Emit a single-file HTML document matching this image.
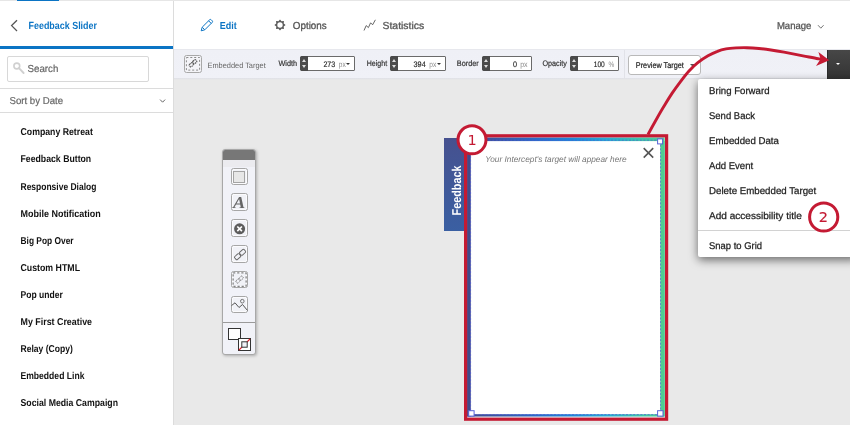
<!DOCTYPE html>
<html lang="en">
<head>
<meta charset="utf-8">
<title>Feedback Slider</title>
<style>
html,body{margin:0;padding:0;}
body{width:850px;height:425px;overflow:hidden;position:relative;background:#fff;font-family:"Liberation Sans",sans-serif;color:#555;}
.abs{position:absolute;}
/* sidebar */
#side{left:0;top:0;width:173px;height:425px;background:#fff;border-right:1px solid #dcdcdc;}
#topline{left:0;top:0;width:850px;height:1px;background:#e6e6e6;}
#topblue{left:17px;top:0;width:41.8px;height:1px;background:#0b74c4;}
#blueline{left:0;top:45.9px;width:173.3px;height:3.6px;background:#0b74c4;}
#search{left:7px;top:56px;width:140px;height:23.5px;border:1px solid #d8d8d8;border-radius:2px;background:#fff;}
.hl{position:absolute;left:0;width:173px;height:1px;background:#dcdcdc;}
/* main */
#canvas{left:174px;top:79px;width:676px;height:346px;background:#e9e9e9;}
#toolbar{left:174px;top:49px;width:676px;height:31px;background:linear-gradient(#e3e4e9 0,#eff0f6 1.5px,#f0f1f7 29px,#dfe0e4 29.6px,#dfe0e4 30.2px,#e9e9e9 30.6px);}
.inp{position:absolute;top:55.5px;height:13.5px;border:1px solid #6a6a6a;background:#fff;border-radius:2px 1px 1px 2px;}
.spin{position:absolute;left:-1px;top:-1px;width:8px;height:15.5px;background:#4a4a4a;border-radius:2px 0 0 2px;}
.spin:before,.spin:after{content:"";position:absolute;left:2px;border-left:2px solid transparent;border-right:2px solid transparent;}
.spin:before{top:3px;border-bottom:3px solid #ddd;}
.spin:after{bottom:3px;border-top:3px solid #ddd;}
/* menu */
#menu{left:698px;top:79px;width:160px;height:178px;background:#fff;border-radius:2px;box-shadow:0 3px 10px rgba(0,0,0,.55);}
/* palette */
#pal{left:222px;top:148.5px;width:33.5px;height:206.5px;box-sizing:border-box;background:#f1f2f8;border:1px solid #a8a8a8;border-radius:3px;box-shadow:1px 1px 3px rgba(0,0,0,.25);overflow:hidden;}
.pb{position:absolute;left:230.7px;width:17.2px;height:17.6px;box-sizing:border-box;border:1px solid #a6a6a6;border-radius:2.5px;background:#f1f2f7;box-shadow:inset 0 0 0 1px #fbfbfd;}
</style>
</head>
<body>
<!-- canvas + toolbar -->
<div id="canvas" class="abs"></div>
<div id="toolbar" class="abs"></div>

<!-- sidebar -->
<div id="side" class="abs"></div>
<div id="topline" class="abs"></div>
<div id="topblue" class="abs"></div>
<div id="blueline" class="abs"></div>
<svg class="abs" style="left:9px;top:18px" width="12" height="16" viewBox="0 0 12 16"><path d="M8 2.2 L2.6 7.6 L8 13" fill="none" stroke="#555" stroke-width="1.3"/></svg>
<div id="search" class="abs"></div>
<svg class="abs" style="left:12px;top:62px" width="14" height="14" viewBox="0 0 14 14"><circle cx="4.8" cy="4" r="2.9" fill="none" stroke="#d0d0d0" stroke-width="1.6"/><path d="M7 6.2 L11.6 11" stroke="#d0d0d0" stroke-width="1.9" stroke-linecap="round"/></svg>
<div class="hl" style="top:88px"></div>
<svg class="abs" style="left:159px;top:98px" width="8" height="6" viewBox="0 0 8 6"><path d="M1.1 1.6 L3.6 4.2 L6.1 1.6" fill="none" stroke="#666" stroke-width="1"/></svg>
<div class="hl" style="top:112px"></div>


<!-- top nav -->
<svg class="abs" style="left:200px;top:18px" width="14" height="14" viewBox="0 0 14 14"><path d="M1.2 12.8 L2.2 9.2 L9.6 1.8 Q10.4 1 11.2 1.8 L12.2 2.8 Q13 3.6 12.2 4.4 L4.8 11.8 Z M2.4 9.4 L4.6 11.6 M8.6 2.8 L11.2 5.4" fill="none" stroke="#0b74c4" stroke-width="1"/></svg>
<svg class="abs" style="left:272.7px;top:18.2px" width="14" height="14" viewBox="-7 -7 14 14"><polygon points="0.00,-5.60 1.53,-3.70 3.96,-3.96 3.70,-1.53 5.60,-0.00 3.70,1.53 3.96,3.96 1.53,3.70 0.00,5.60 -1.53,3.70 -3.96,3.96 -3.70,1.53 -5.60,0.00 -3.70,-1.53 -3.96,-3.96 -1.53,-3.70" fill="#5a5a5a"/><circle r="2.7" fill="#fff"/></svg>
<svg class="abs" style="left:363px;top:19px" width="14" height="13" viewBox="0 0 14 13"><path d="M1 11.5 L3.2 6.6 L5.4 8.6 L7.6 3.8 L9.6 5.8 L12.4 0.8" fill="none" stroke="#555" stroke-width="0.9"/></svg>
<svg class="abs" style="left:817px;top:24px" width="8" height="6" viewBox="0 0 8 6"><path d="M1 1.2 L3.8 4.2 L6.6 1.2" fill="none" stroke="#666" stroke-width="0.9"/></svg>

<!-- toolbar contents -->
<div class="abs" style="left:184px;top:55px;width:18px;height:17.5px;box-sizing:border-box;border:1px solid #a8a8a8;border-radius:2.5px;background:#f4f4f8;"></div>
<svg class="abs" style="left:184px;top:55px" width="18" height="18" viewBox="0 0 18 18"><rect x="2.4" y="2.5" width="13.2" height="12.6" fill="none" stroke="#8c8c8c" stroke-width="1" stroke-dasharray="2 1.9"/><g transform="translate(9 8.3) rotate(-42)" fill="none" stroke="#5e5e5e" stroke-width="1.25" stroke-dasharray="1.5 .6"><rect x="-4.3" y="-1.5" width="4" height="3" rx="1"/><rect x="0.3" y="-1.5" width="4" height="3" rx="1"/></g></svg>

<div class="inp" style="left:300px;width:53px;"><div class="spin"></div></div>
<div class="abs" style="left:346.3px;top:63.3px;border-left:2.3px solid transparent;border-right:2.3px solid transparent;border-top:2.6px solid #333;"></div>

<div class="inp" style="left:390px;width:54px;"><div class="spin"></div></div>
<div class="abs" style="left:436.8px;top:63.3px;border-left:2.3px solid transparent;border-right:2.3px solid transparent;border-top:2.6px solid #333;"></div>

<div class="inp" style="left:482px;width:47.5px;"><div class="spin"></div></div>

<div class="inp" style="left:570px;width:46.5px;"><div class="spin"></div></div>

<div class="abs" style="left:623.5px;top:50px;width:1px;height:28px;background:#e1e2e8;"></div>
<div class="abs" style="left:628px;top:55px;width:73px;height:20px;box-sizing:border-box;border:1px solid #b9b9b9;border-radius:3px;background:#fff;"></div>
<div class="abs" style="left:690px;top:64px;border-left:3px solid transparent;border-right:3px solid transparent;border-top:3.5px solid #555;"></div>

<div class="abs" style="left:827px;top:50px;width:23px;height:28.5px;background:linear-gradient(#474747,#333);border-left:1px solid #2c2c2c;box-sizing:border-box;"></div>
<div class="abs" style="left:836.2px;top:63.4px;border-left:2.8px solid transparent;border-right:2.8px solid transparent;border-top:2.8px solid #fff;"></div>

<!-- palette -->
<div id="pal" class="abs">
  <div class="abs" style="left:0;top:0;width:33px;height:10px;background:#777;"></div>
  <div class="abs" style="left:0;top:10px;width:33px;height:7px;background:#ebebef;"></div>
  <div class="abs" style="left:0;top:172px;width:33px;height:1px;background:#9a9a9a;"></div>
</div>
<div class="pb" style="top:167.9px"></div>
<div class="pb" style="top:193.4px"></div>
<div class="pb" style="top:219.2px"></div>
<div class="pb" style="top:245.2px"></div>
<div class="pb" style="top:270.7px"></div>
<div class="pb" style="top:295.9px"></div>
<!-- palette icons -->
<div class="abs" style="left:233.3px;top:171px;width:12px;height:11.7px;box-sizing:border-box;border:1px solid #a4a4a4;background:#e7e7e7;"></div>
<svg class="abs" style="left:231px;top:219.5px" width="18" height="18" viewBox="0 0 18 18"><circle cx="8.6" cy="8.8" r="5.5" fill="#5c5c5c"/><path d="M6.3 6.5 L10.9 11.1 M10.9 6.5 L6.3 11.1" stroke="#fff" stroke-width="1.7"/></svg>
<svg class="abs" style="left:231px;top:245.5px" width="18" height="18" viewBox="0 0 18 18"><g transform="translate(9.1 8.5) rotate(-42)" fill="none" stroke="#666" stroke-width="0.95"><rect x="-6.3" y="-2" width="6" height="4" rx="1.1"/><rect x="0.3" y="-2" width="6" height="4" rx="1.1"/><path d="M-2.2 0 L2.2 0" stroke-width="0"/></g></svg>
<svg class="abs" style="left:231px;top:271px" width="18" height="18" viewBox="0 0 18 18"><rect x="2.1" y="1.9" width="13" height="13.4" fill="none" stroke="#666" stroke-width="1" stroke-dasharray="2.2 1.9"/><g transform="translate(8.6 8.6) rotate(-42)" fill="none" stroke="#777" stroke-width="0.9" stroke-dasharray="1.3 .7"><rect x="-4.2" y="-1.5" width="4" height="3" rx="1"/><rect x="0.2" y="-1.5" width="4" height="3" rx="1"/></g></svg>
<svg class="abs" style="left:231px;top:296.5px" width="17" height="17" viewBox="0 0 17 17"><path d="M0.5 8.6 L4 5.8 L8 10.5 L11.5 7.5 L16.5 13.5" fill="none" stroke="#555" stroke-width="1"/><circle cx="11.3" cy="4.2" r="1.8" fill="none" stroke="#666" stroke-width="0.9"/></svg>
<div class="abs" style="left:228px;top:327.5px;width:12.5px;height:12.5px;box-sizing:border-box;border:1px solid #333;background:#fff;"></div>
<svg class="abs" style="left:238px;top:337.5px" width="13" height="13" viewBox="0 0 13 13"><rect x="0.5" y="0.5" width="12" height="12" fill="#fff" stroke="#333" stroke-width="1"/><path d="M1 12 L12 1" stroke="#e0202a" stroke-width="1.1"/><rect x="3.8" y="3.8" width="5.4" height="5.4" fill="#f1f2f8" stroke="#333" stroke-width="1"/><path d="M3.8 9.2 L9.2 3.8" stroke="#e0202a" stroke-width="0" /></svg>

<!-- creative on canvas -->
<div class="abs" style="left:444.4px;top:138.2px;width:22px;height:93.3px;background:linear-gradient(#46518f,#3a5fa2);"></div>

<svg class="abs" style="left:0;top:0" width="850" height="425" viewBox="0 0 850 425">
  <defs><linearGradient id="cg" x1="0" y1="0" x2="1" y2="0"><stop offset="0" stop-color="#404b8b"/><stop offset=".14" stop-color="#3b55a0"/><stop offset=".34" stop-color="#2b6bc6"/><stop offset=".52" stop-color="#1f86d6"/><stop offset=".7" stop-color="#27a9d4"/><stop offset=".86" stop-color="#3cc4ae"/><stop offset="1" stop-color="#50cc92"/></linearGradient></defs>
  <rect x="466" y="136" width="200" height="282" fill="#f0f0f0"/>
  <rect x="467.2" y="137.5" width="197.4" height="279" fill="url(#cg)"/>
  <rect x="467.2" y="141" width="3.6" height="275.5" fill="#404b8b"/>
  <rect x="660.3" y="141" width="4.3" height="275.5" fill="#50cc92"/>
  <rect x="470.8" y="141.1" width="189.5" height="273.1" fill="#fff"/>
  <rect x="470.6" y="140.2" width="189.9" height="274.4" fill="none" stroke="#4f57d6" stroke-opacity=".8" stroke-width=".8" stroke-dasharray="2 1.6"/>
  <path d="M643.7 148.1 L653.2 157.6 M653.2 148.1 L643.7 157.6" stroke="#555" stroke-width="1.6"/>
  <g fill="#fff" stroke="#5560d8" stroke-width="1"><rect x="657.6" y="138.9" width="5" height="5"/><rect x="468.7" y="410.7" width="5.4" height="5.4"/><rect x="657.6" y="410.7" width="5.4" height="5.4"/></g>
</svg>

<!-- dropdown menu -->
<div id="menu" class="abs"></div>
<div class="abs" style="left:698px;top:229.5px;width:152px;height:1px;background:#d2d2d2;"></div>

<svg class="abs" style="left:0;top:0;will-change:transform" width="850" height="425" viewBox="0 0 850 425" font-family="Liberation Sans, sans-serif" text-rendering="geometricPrecision">
<text x="28.5" y="29.0" font-size="10.4" fill="#0b74c4" font-weight="bold" textLength="68.5" lengthAdjust="spacingAndGlyphs">Feedback Slider</text>
<text x="27.5" y="72.4" font-size="10.1" fill="#666" stroke="#666" stroke-width=".2" textLength="30.8" lengthAdjust="spacingAndGlyphs">Search</text>
<text x="9.5" y="104.4" font-size="10.0" fill="#666" stroke="#666" stroke-width=".2" textLength="53.6" lengthAdjust="spacingAndGlyphs">Sort by Date</text>
<text x="20.5" y="135.0" font-size="10.0" fill="#111" font-weight="bold" textLength="72.3" lengthAdjust="spacingAndGlyphs">Company Retreat</text>
<text x="20.5" y="162.0" font-size="10.0" fill="#111" font-weight="bold" textLength="70.7" lengthAdjust="spacingAndGlyphs">Feedback Button</text>
<text x="20.5" y="190.0" font-size="10.0" fill="#111" font-weight="bold" textLength="75.9" lengthAdjust="spacingAndGlyphs">Responsive Dialog</text>
<text x="20.5" y="217.0" font-size="10.0" fill="#111" font-weight="bold" textLength="80.3" lengthAdjust="spacingAndGlyphs">Mobile Notification</text>
<text x="20.5" y="244.0" font-size="10.0" fill="#111" font-weight="bold" textLength="53.1" lengthAdjust="spacingAndGlyphs">Big Pop Over</text>
<text x="20.5" y="271.0" font-size="10.0" fill="#111" font-weight="bold" textLength="59.5" lengthAdjust="spacingAndGlyphs">Custom HTML</text>
<text x="20.5" y="298.0" font-size="10.0" fill="#111" font-weight="bold" textLength="42.3" lengthAdjust="spacingAndGlyphs">Pop under</text>
<text x="20.5" y="325.0" font-size="10.0" fill="#111" font-weight="bold" textLength="71.5" lengthAdjust="spacingAndGlyphs">My First Creative</text>
<text x="20.5" y="352.0" font-size="10.0" fill="#111" font-weight="bold" textLength="52.3" lengthAdjust="spacingAndGlyphs">Relay (Copy)</text>
<text x="20.5" y="379.0" font-size="10.0" fill="#111" font-weight="bold" textLength="63.9" lengthAdjust="spacingAndGlyphs">Embedded Link</text>
<text x="20.5" y="406.0" font-size="10.0" fill="#111" font-weight="bold" textLength="97.5" lengthAdjust="spacingAndGlyphs">Social Media Campaign</text>
<text x="219.7" y="29.4" font-size="10.2" fill="#0b74c4" font-weight="bold" textLength="17.0" lengthAdjust="spacingAndGlyphs">Edit</text>
<text x="292.8" y="29.4" font-size="10.2" fill="#555" stroke="#555" stroke-width=".3" textLength="33.9" lengthAdjust="spacingAndGlyphs">Options</text>
<text x="382.5" y="29.4" font-size="10.2" fill="#555" stroke="#555" stroke-width=".3" textLength="41.7" lengthAdjust="spacingAndGlyphs">Statistics</text>
<text x="776.9" y="29.3" font-size="10.0" fill="#555" stroke="#555" stroke-width=".3" textLength="34.5" lengthAdjust="spacingAndGlyphs">Manage</text>
<text x="207.5" y="67.5" font-size="7.8" fill="#666" textLength="58.2" lengthAdjust="spacingAndGlyphs">Embedded Target</text>
<text x="278.5" y="66.3" font-size="8.0" fill="#333" stroke="#333" stroke-width=".2" textLength="18.6" lengthAdjust="spacingAndGlyphs">Width</text>
<text x="366.8" y="66.3" font-size="8.0" fill="#333" stroke="#333" stroke-width=".2" textLength="20.3" lengthAdjust="spacingAndGlyphs">Height</text>
<text x="456.8" y="66.3" font-size="8.0" fill="#333" stroke="#333" stroke-width=".2" textLength="21.9" lengthAdjust="spacingAndGlyphs">Border</text>
<text x="542.5" y="66.3" font-size="8.0" fill="#333" stroke="#333" stroke-width=".2" textLength="24.4" lengthAdjust="spacingAndGlyphs">Opacity</text>
<text x="323.4" y="66.6" font-size="8.0" fill="#222" stroke="#222" stroke-width=".15" textLength="11.8" lengthAdjust="spacingAndGlyphs">273</text>
<text x="338.8" y="66.6" font-size="8.0" fill="#8a8a8a" textLength="7.0" lengthAdjust="spacingAndGlyphs">px</text>
<text x="413.6" y="66.6" font-size="8.0" fill="#222" stroke="#222" stroke-width=".15" textLength="12.1" lengthAdjust="spacingAndGlyphs">394</text>
<text x="429.3" y="66.6" font-size="8.0" fill="#8a8a8a" textLength="7.0" lengthAdjust="spacingAndGlyphs">px</text>
<text x="513.0" y="66.6" font-size="8.0" fill="#222" stroke="#222" stroke-width=".15" textLength="4.0" lengthAdjust="spacingAndGlyphs">0</text>
<text x="520.2" y="66.6" font-size="8.0" fill="#8a8a8a" textLength="7.4" lengthAdjust="spacingAndGlyphs">px</text>
<text x="593.8" y="66.6" font-size="8.0" fill="#222" stroke="#222" stroke-width=".15" textLength="11.0" lengthAdjust="spacingAndGlyphs">100</text>
<text x="608.6" y="66.6" font-size="8.0" fill="#8a8a8a" textLength="5.8" lengthAdjust="spacingAndGlyphs">%</text>
<text x="635.8" y="67.6" font-size="8.2" fill="#222" stroke="#222" stroke-width=".2" textLength="48.1" lengthAdjust="spacingAndGlyphs">Preview Target</text>
<text x="485.2" y="162.4" font-size="8.4" fill="#777" font-style="italic" textLength="141.5" lengthAdjust="spacingAndGlyphs">Your Intercept's target will appear here</text>
<text x="709.0" y="94.0" font-size="9.8" fill="#222" stroke="#222" stroke-width=".25" textLength="60.5" lengthAdjust="spacingAndGlyphs">Bring Forward</text>
<text x="709.0" y="119.0" font-size="9.8" fill="#222" stroke="#222" stroke-width=".25" textLength="45.9" lengthAdjust="spacingAndGlyphs">Send Back</text>
<text x="709.0" y="144.0" font-size="9.8" fill="#222" stroke="#222" stroke-width=".25" textLength="69.9" lengthAdjust="spacingAndGlyphs">Embedded Data</text>
<text x="709.0" y="169.0" font-size="9.8" fill="#222" stroke="#222" stroke-width=".25" textLength="44.2" lengthAdjust="spacingAndGlyphs">Add Event</text>
<text x="709.0" y="194.0" font-size="9.8" fill="#222" stroke="#222" stroke-width=".25" textLength="107.2" lengthAdjust="spacingAndGlyphs">Delete Embedded Target</text>
<text x="709.0" y="219.3" font-size="9.8" fill="#222" stroke="#222" stroke-width=".25" textLength="92.8" lengthAdjust="spacingAndGlyphs">Add accessibility title</text>
<text x="709.0" y="248.7" font-size="9.8" fill="#222" stroke="#222" stroke-width=".25" textLength="53.1" lengthAdjust="spacingAndGlyphs">Snap to Grid</text>
<text transform="translate(461.2 215.4) rotate(-90)" font-size="12.8" font-weight="bold" fill="#fff" textLength="49.8" lengthAdjust="spacingAndGlyphs">Feedback</text>
<text x="232.9" y="207.8" font-family="Liberation Serif, serif" font-style="italic" font-weight="bold" font-size="16.5" fill="#666" textLength="12.2" lengthAdjust="spacingAndGlyphs">A</text>
</svg>
<!-- annotations -->
<svg class="abs" style="left:0;top:0" width="850" height="425" viewBox="0 0 850 425">
  <rect x="465.6" y="135.8" width="201" height="283.4" fill="none" stroke="#c41a33" stroke-width="3.2"/>
  <path d="M648 134.5 C649.3 132.1 653.4 124.6 656 120 C658.6 115.4 660.8 111.4 663.5 107 C666.2 102.6 669.2 97.6 672 93.4 C674.8 89.2 677.7 85.3 680.5 81.6 C683.3 77.9 686.2 74.1 689 71 C691.8 67.9 694.3 65.3 697.5 62.8 C700.7 60.3 704.7 57.7 708 55.8 C711.3 53.9 714.5 52.4 717.5 51.3 C720.5 50.1 722.9 49.5 726 48.9 C729.1 48.3 732.5 48.1 736 47.9 C739.5 47.7 743.2 47.6 747 47.7 C750.8 47.8 755.0 48.1 759 48.5 C763.0 48.9 766.8 49.4 771 50 C775.2 50.6 778.7 51.2 784 52.2 C789.3 53.2 797.3 54.7 803 55.8 C808.7 56.9 814.5 58.1 818 58.7 C821.5 59.4 823.0 59.5 824 59.7" fill="none" stroke="#c41a33" stroke-width="2.9"/>
  <path d="M829.3 60.2 L816 65.9 L820.6 59 L818.4 52 Z" fill="#c41a33"/>
  <circle cx="472" cy="139.8" r="14" fill="#fff" stroke="#c41a33" stroke-width="3"/>
  <text x="472.2" y="144.9" text-anchor="middle" font-family="DejaVu Sans, sans-serif" font-size="14.5" fill="#c41a33">1</text>
  <circle cx="823.7" cy="217" r="14.1" fill="#fff" stroke="#c41a33" stroke-width="3"/>
  <text x="823.4" y="221.6" text-anchor="middle" font-family="DejaVu Sans, sans-serif" font-size="14.5" fill="#c41a33" stroke="#c41a33" stroke-width=".15">2</text>
</svg>
</body>
</html>
